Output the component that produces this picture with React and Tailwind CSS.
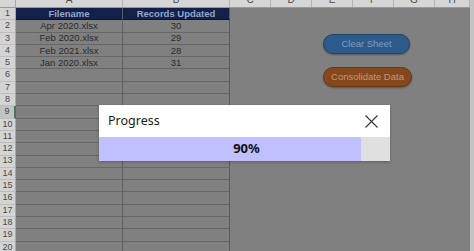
import React from "react";

const cols = [
  { l: "A", w: "w-[107px]" },
  { l: "B", w: "w-[107px]" },
  { l: "C", w: "w-[41px]" },
  { l: "D", w: "w-[41px]" },
  { l: "E", w: "w-[41px]" },
  { l: "F", w: "w-[41px]" },
  { l: "G", w: "w-[41px]" },
  { l: "H", w: "w-[35px]" },
];

const data = [
  ["Apr 2020.xlsx", "30"],
  ["Feb 2020.xlsx", "29"],
  ["Feb 2021.xlsx", "28"],
  ["Jan 2020.xlsx", "31"],
];

export default function App() {
  const rows = Array.from({ length: 20 }, (_, i) => i + 1);
  return (
    <div
      className="relative w-[474px] h-[251px] overflow-hidden bg-[#808080] flex"
      style={{ fontFamily: '"Liberation Sans", Arial, sans-serif' }}
    >
      <div className="flex flex-col w-[470px]">
        {/* column header */}
        <div className="flex h-[8px] bg-[#d6d6d6] border-b border-[#9a9a9a] overflow-hidden shrink-0">
          <div className="w-[16px] border-r border-[#a8a8a8] shrink-0" />
          {cols.map((c) => (
            <div
              key={c.l}
              className={`${c.w} shrink-0 border-r border-[#b4b4b4] relative overflow-hidden`}
            >
              <span className="absolute left-0 right-0 text-center top-[-6px] text-[10px] leading-[12px] text-[#4a4a4a]">
                {c.l}
              </span>
            </div>
          ))}
        </div>
        {rows.map((r) => {
          const isHead = r === 1;
          const d = data[r - 2];
          return (
            <div key={r} className="flex h-[12.3px] shrink-0">
              <div
                className={`w-[16px] shrink-0 flex items-center justify-center text-[9px] text-[#484848] border-b border-[#bdbdbd] ${
                  r === 9
                    ? "bg-[#c2c2c2] border-r-2 border-r-[#3f7a55]"
                    : "bg-[#d4d4d4] border-r border-r-[#a8a8a8]"
                }`}
              >
                {r}
              </div>
              <div
                className={`w-[107px] shrink-0 flex items-center justify-center text-[9.5px] leading-none ${
                  isHead
                    ? "bg-[#12204a] text-[#93a8cc] font-bold border-b border-[#0c1530]"
                    : "text-[#2b2b2b] border-b border-[#666666]"
                } border-r border-r-[#5e5e5e]`}
              >
                {isHead ? "Filename" : d ? d[0] : ""}
              </div>
              <div
                className={`w-[107px] shrink-0 flex items-center justify-center text-[9.5px] leading-none ${
                  isHead
                    ? "bg-[#12204a] text-[#93a8cc] font-bold border-b border-[#0c1530]"
                    : "text-[#2b2b2b] border-b border-[#666666]"
                } border-r border-r-[#5a5a5a]`}
              >
                {isHead ? "Records Updated" : d ? d[1] : ""}
              </div>
              <div className="flex-1" />
            </div>
          );
        })}
      </div>
      <div className="w-[4px] bg-[#c4c4c4] shrink-0" />

      {/* floating buttons */}
      <div className="absolute left-[323px] top-[34px] w-[87px] h-[20px] rounded-full bg-[#2c5a8b] border border-[#22456b] shadow-[0_1px_2px_rgba(0,0,0,0.35)] flex items-center justify-center text-[9.5px] text-[#819dc0]">
        Clear Sheet
      </div>
      <div className="absolute left-[323px] top-[67px] w-[89px] h-[20px] rounded-full bg-[#87471d] border border-[#6b3816] shadow-[0_1px_2px_rgba(0,0,0,0.35)] flex items-center justify-center text-[9.5px] text-[#c49878]">
        Consolidate Data
      </div>

      {/* progress dialog */}
      <div
        className="absolute left-[99px] top-[105px] w-[291px] flex flex-col shadow-[0_1px_3px_rgba(0,0,0,0.25)]"
        style={{ fontFamily: '"Noto Sans", "Open Sans", sans-serif' }}
      >
        <div className="h-[32px] bg-white flex items-center justify-between pl-[9px] pr-[12px]">
          <span className="text-[12.5px] text-[#1a1a1a]">Progress</span>
          <svg width="13" height="13" viewBox="0 0 13 13">
            <path d="M0.5 0.5 L12.5 12.5 M12.5 0.5 L0.5 12.5" stroke="#333" strokeWidth="1.1" fill="none" />
          </svg>
        </div>
        <div className="relative h-[24px] bg-[#e0e0e0] flex">
          <div className="w-[262px] h-full bg-[#c0c0ff]" />
          <span className="absolute inset-0 flex items-center justify-center text-[13px] font-bold text-[#111] pl-[4px]">
            90%
          </span>
        </div>
      </div>
    </div>
  );
}
